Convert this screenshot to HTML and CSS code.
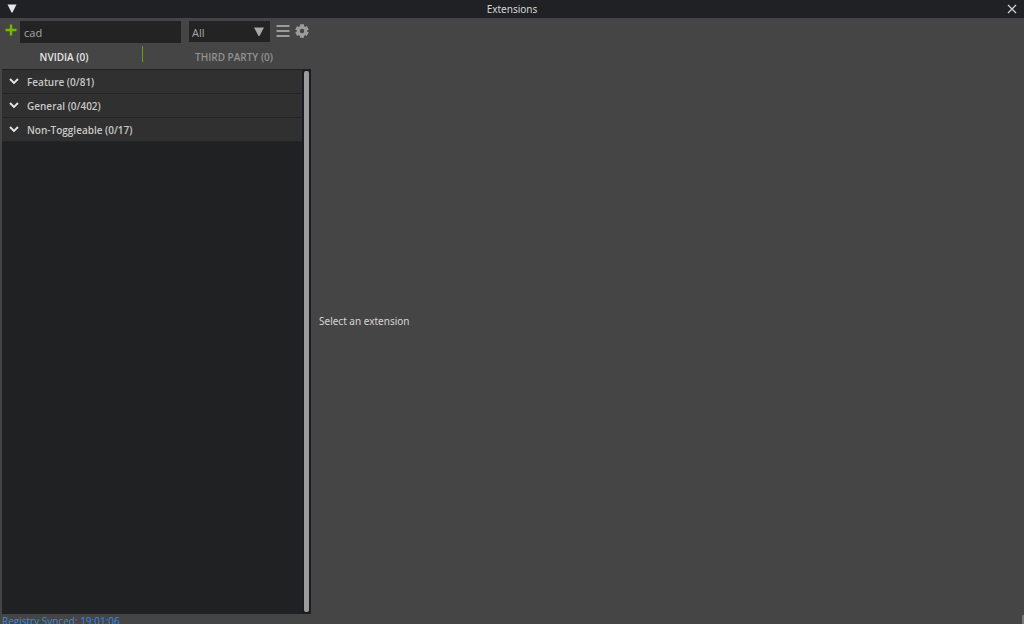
FILE: index.html
```html
<!DOCTYPE html>
<html lang="en">
<head>
  <meta charset="UTF-8" />
  <meta name="viewport" content="width=device-width, initial-scale=1.0"/>
  <title>Extensions</title>
  <link rel="stylesheet" href="styles.css">
</head>
<body>
  <header class="titlebar">
    <button class="icon-btn" type="button" aria-label="Collapse window">
      <svg width="10" height="10" viewBox="0 0 10 10"><path d="M0.5 0.5h9L5.5 8.5h-1z" fill="#e6e6e6"/></svg>
    </button>
    <h1>Extensions</h1>
    <button class="icon-btn" type="button" aria-label="Close window">
      <svg width="10" height="10" viewBox="0 0 10 10"><path d="M1 1l8 8M9 1L1 9" stroke="#d4d4d4" stroke-width="1.2"/></svg>
    </button>
  </header>

  <div class="window">
    <aside class="sidebar">
      <div class="toolbar">
        <button class="icon-btn add" type="button" aria-label="Add extension">
          <svg width="12" height="12" viewBox="0 0 12 12"><path d="M6 0.5v11M0.5 6h11" stroke="#76b900" stroke-width="2.4"/></svg>
        </button>
        <input class="search" type="text" value="cad" aria-label="Search extensions">
        <div class="filter">
          <select aria-label="Filter">
            <option>All</option>
          </select>
          <svg class="arrow" width="10" height="10" viewBox="0 0 10 10"><path d="M0 0.5h10L5.5 9h-1z" fill="#a8a8a8"/></svg>
        </div>
        <button class="icon-btn menu" type="button" aria-label="Menu">
          <svg width="14" height="12" viewBox="0 0 14 12"><path d="M0.5 1h13M0.5 6h13M0.5 11h13" stroke="#9c9c9c" stroke-width="2"/></svg>
        </button>
        <button class="icon-btn settings" type="button" aria-label="Settings">
          <svg width="14" height="14" viewBox="0 0 14 14">
            <g stroke="#9c9c9c" stroke-width="4" stroke-linecap="butt">
              <path d="M7 0.3v3M7 10.7v3M1.2 3.65l2.6 1.5M10.2 8.85l2.6 1.5M1.2 10.35l2.6-1.5M10.2 5.15l2.6-1.5"/>
            </g>
            <circle cx="7" cy="7" r="3.7" fill="none" stroke="#9c9c9c" stroke-width="3"/>
          </svg>
        </button>
      </div>

      <div class="tabs">
        <button class="tab active" type="button">NVIDIA (0)</button>
        <span class="divider"></span>
        <button class="tab" type="button">THIRD PARTY (0)</button>
      </div>

      <div class="list">
        <div class="groups">
          <button class="group" type="button">
            <svg width="10" height="7" viewBox="0 0 10 7"><path d="M1 1l4 4 4-4" fill="none" stroke="#e8e8e8" stroke-width="1.8"/></svg>
            <span>Feature (0/81)</span>
          </button>
          <button class="group" type="button">
            <svg width="10" height="7" viewBox="0 0 10 7"><path d="M1 1l4 4 4-4" fill="none" stroke="#e8e8e8" stroke-width="1.8"/></svg>
            <span>General (0/402)</span>
          </button>
          <button class="group" type="button">
            <svg width="10" height="7" viewBox="0 0 10 7"><path d="M1 1l4 4 4-4" fill="none" stroke="#e8e8e8" stroke-width="1.8"/></svg>
            <span>Non-Toggleable (0/17)</span>
          </button>
        </div>
        <div class="scrollbar"><div class="thumb"></div></div>
      </div>

      <div class="status">Registry Synced: 19:01:06</div>
    </aside>

    <main class="details">
      <p>Select an extension</p>
    </main>
    <span class="grip"></span>
  </div>
</body>
</html>
```

FILE: styles.css
```css
* {
  box-sizing: border-box;
}

body {
  margin: 0;
  height: 100vh;
  display: flex;
  flex-direction: column;
  overflow: hidden;
  background: #454545;
  color: #d6d6d6;
  font-family: "Open Sans", sans-serif;
  font-size: 10px;
  line-height: 14px;
}

button, input, select {
  font: inherit;
  color: inherit;
  border: none;
  border-radius: 0;
  margin: 0;
  padding: 0;
  background: none;
}

svg {
  display: block;
}

.icon-btn {
  display: flex;
}

/* title bar */
.titlebar {
  flex: none;
  display: flex;
  align-items: center;
  justify-content: space-between;
  height: 18px;
  padding: 0 7px;
  background: #1f2124;
}

.titlebar h1 {
  margin: 0;
  font-family: "Noto Sans", sans-serif;
  font-size: 10px;
  font-weight: 400;
}

.window {
  position: relative;
  flex: 1;
  min-height: 0;
  display: flex;
}

/* left panel */
.sidebar {
  width: 311px;
  flex: none;
  display: flex;
  flex-direction: column;
}

.toolbar {
  flex: none;
  display: flex;
  align-items: flex-start;
  height: 28px;
  padding: 3px 2px 0 5px;
}

.add {
  margin: 3px 3px 0 0;
}

.search {
  flex: 1;
  min-width: 0;
  height: 22px;
  padding: 1px 4px 0;
  background: #232323;
  color: #a8a8a8;
  font-size: 11px;
  outline: none;
}

.filter {
  position: relative;
  width: 81px;
  height: 21px;
  margin-left: 8px;
}

.filter select {
  appearance: none;
  width: 100%;
  height: 100%;
  padding: 2px 3px 0;
  background: #232323;
  color: #a8a8a8;
  font-size: 11px;
}

.arrow {
  position: absolute;
  right: 6px;
  top: 6px;
  pointer-events: none;
}

.menu {
  margin: 4px 0 0 6px;
}

.settings {
  margin: 3px 0 0 5px;
}

.tabs {
  flex: none;
  display: flex;
  height: 23px;
  padding: 0 0 0 2px;
}

.tab {
  flex: 1;
  height: 22px;
  color: #929292;
  font-weight: 600;
}

.tab:first-child {
  flex: none;
  width: 124px;
}

.tab.active {
  color: #e6e6e6;
}

.divider {
  width: 1px;
  height: 16px;
  margin: 0 14px 0 16px;
  background: #6a9f10;
}

.list {
  flex: 1;
  min-height: 0;
  display: flex;
  margin: 0 0 0 2px;
  background: #1f2123;
}

.groups {
  flex: 1;
  padding-top: 1px;
}

.group {
  display: flex;
  align-items: center;
  gap: 8px;
  width: 100%;
  height: 24px;
  padding: 0 7px;
  border-bottom: 1px solid #232425;
  background: #303030;
  color: #c8c8c8;
  font-weight: 600;
  text-align: left;
}

.scrollbar {
  width: 9px;
  padding: 2px;
  background: #1c1d22;
}

.thumb {
  height: 100%;
  border-radius: 2px;
  background: #9b9b9b;
}

/* one line, the window edge runs through it */
.status {
  flex: none;
  height: 10px;
  padding-left: 2px;
  color: #338be6;
}

/* right panel */
.details {
  flex: 1;
  display: flex;
  align-items: center;
  padding-left: 8px;
}

.details p {
  margin: 0;
  font-family: "Noto Sans", sans-serif;
}

.grip {
  position: absolute;
  right: 0;
  bottom: 0;
  width: 2px;
  height: 9px;
  background: #6f7a7c;
}
```
